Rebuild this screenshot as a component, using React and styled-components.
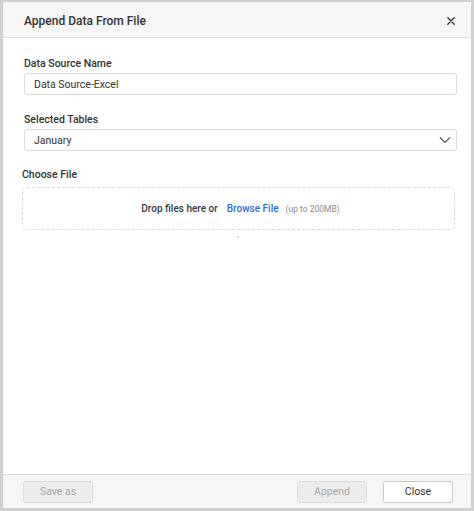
import styled, { createGlobalStyle } from 'styled-components';

const GlobalStyle = createGlobalStyle`
  html, body {
    margin: 0;
    padding: 0;
    background: #ffffff;
  }
  * {
    box-sizing: border-box;
  }
`;

function App() {
  return (
    <>
      <GlobalStyle />
      <Dialog>
        <Header>
          <Title>Append Data From File</Title>
          <CloseIcon aria-label="close">
            <svg width="8" height="8" viewBox="0 0 10 10">
              <path d="M1 1 L9 9 M9 1 L1 9" stroke="#333" strokeWidth="1.7" strokeLinecap="round" />
            </svg>
          </CloseIcon>
        </Header>
        <Body>
          <Field>
            <Label>Data Source Name</Label>
            <Input defaultValue="Data Source-Excel" />
          </Field>
          <Field>
            <Label>Selected Tables</Label>
            <Select>
              <span>January</span>
              <svg width="12" height="8" viewBox="0 0 12 8">
                <path d="M1 1.5 L6 6.5 L11 1.5" fill="none" stroke="#555" strokeWidth="1.2" />
              </svg>
            </Select>
          </Field>
          <Field $drop>
            <Label>Choose File</Label>
            <DropZone>
              <DropText>Drop files here or</DropText>
              <BrowseLink>Browse File</BrowseLink>
              <Limit>(up to 200MB)</Limit>
            </DropZone>
          </Field>
          <Dot />
        </Body>
        <Footer>
          <Button disabled>Save as</Button>
          <Spacer />
          <Button disabled>Append</Button>
          <Button>Close</Button>
        </Footer>
      </Dialog>
    </>
  );
}

const Dialog = styled.div`
  width: 474px;
  height: 511px;
  border: 3px solid #d0d0d0;
  border-top-width: 2px;
  display: flex;
  flex-direction: column;
  background: #ffffff;
  font-family: Roboto, "Liberation Sans", sans-serif;
  color: #333333;
`;

const Header = styled.div`
  height: 36px;
  flex-shrink: 0;
  display: flex;
  align-items: center;
  justify-content: space-between;
  padding: 0 16px 0 21px;
  background: #f6f6f6;
  border-bottom: 1px solid #e2e2e2;
`;

const Title = styled.div`
  font-size: 12px;
  font-weight: 500;
  color: #333333;
  padding-top: 3px;
`;

const CloseIcon = styled.div`
  display: flex;
  align-items: center;
  padding-top: 2px;
`;

const Body = styled.div`
  flex: 1;
  display: flex;
  flex-direction: column;
  padding: 19px 14px 0 21px;
  gap: 18px;
`;

const Field = styled.div`
  display: flex;
  flex-direction: column;
  gap: 2px;
  margin-left: ${(p) => (p.$drop ? '-2px' : '0')};
  margin-right: ${(p) => (p.$drop ? '2px' : '0')};
  margin-top: ${(p) => (p.$drop ? '-1px' : '0')};
`;

const Label = styled.label`
  font-size: 10.5px;
  line-height: 14px;
  font-weight: 500;
  color: #333333;
`;

const Input = styled.input`
  height: 22px;
  border: 1px solid #dcdcdc;
  border-radius: 3px;
  padding: 0 9px;
  font-family: Roboto, "Liberation Sans", sans-serif;
  font-size: 10.5px;
  color: #333333;
  outline: none;
  background: #ffffff;
`;

const Select = styled.div`
  height: 22px;
  border: 1px solid #dcdcdc;
  border-radius: 3px;
  padding: 0 5px 0 9px;
  display: flex;
  align-items: center;
  justify-content: space-between;
  font-size: 10.5px;
  color: #333333;
`;

const DropZone = styled.div`
  height: 43px;
  margin-top: 3px;
  border: 1px dashed #dadada;
  border-radius: 5px;
  display: flex;
  align-items: center;
  justify-content: center;
  padding-left: 4px;
`;

const DropText = styled.span`
  font-size: 10px;
  font-weight: 500;
  color: #3a3a3a;
  margin-right: 9px;
`;

const BrowseLink = styled.span`
  font-size: 10px;
  font-weight: 500;
  color: #2f6fd0;
  margin-right: 7px;
`;

const Limit = styled.span`
  font-size: 8.5px;
  color: #8a8a8a;
`;

const Dot = styled.div`
  width: 2px;
  height: 2px;
  border-radius: 1px;
  background: #cccccc;
  align-self: center;
  margin-top: -12px;
  margin-left: -6px;
`;

const Footer = styled.div`
  height: 34px;
  flex-shrink: 0;
  display: flex;
  align-items: center;
  gap: 16px;
  padding: 0 18px 0 20px;
  background: #f6f6f6;
  border-top: 1px solid #e0e0e0;
`;

const Spacer = styled.div`
  flex: 1;
`;

const Button = styled.button`
  width: 70px;
  height: 22px;
  border-radius: 2px;
  font-family: Roboto, "Liberation Sans", sans-serif;
  font-size: 10.5px;
  border: 1px solid ${(p) => (p.disabled ? '#dddddd' : '#c8c8c8')};
  background: ${(p) => (p.disabled ? '#ececec' : '#ffffff')};
  color: ${(p) => (p.disabled ? '#a8a8a8' : '#333333')};
  cursor: ${(p) => (p.disabled ? 'default' : 'pointer')};
`;

export default App;
